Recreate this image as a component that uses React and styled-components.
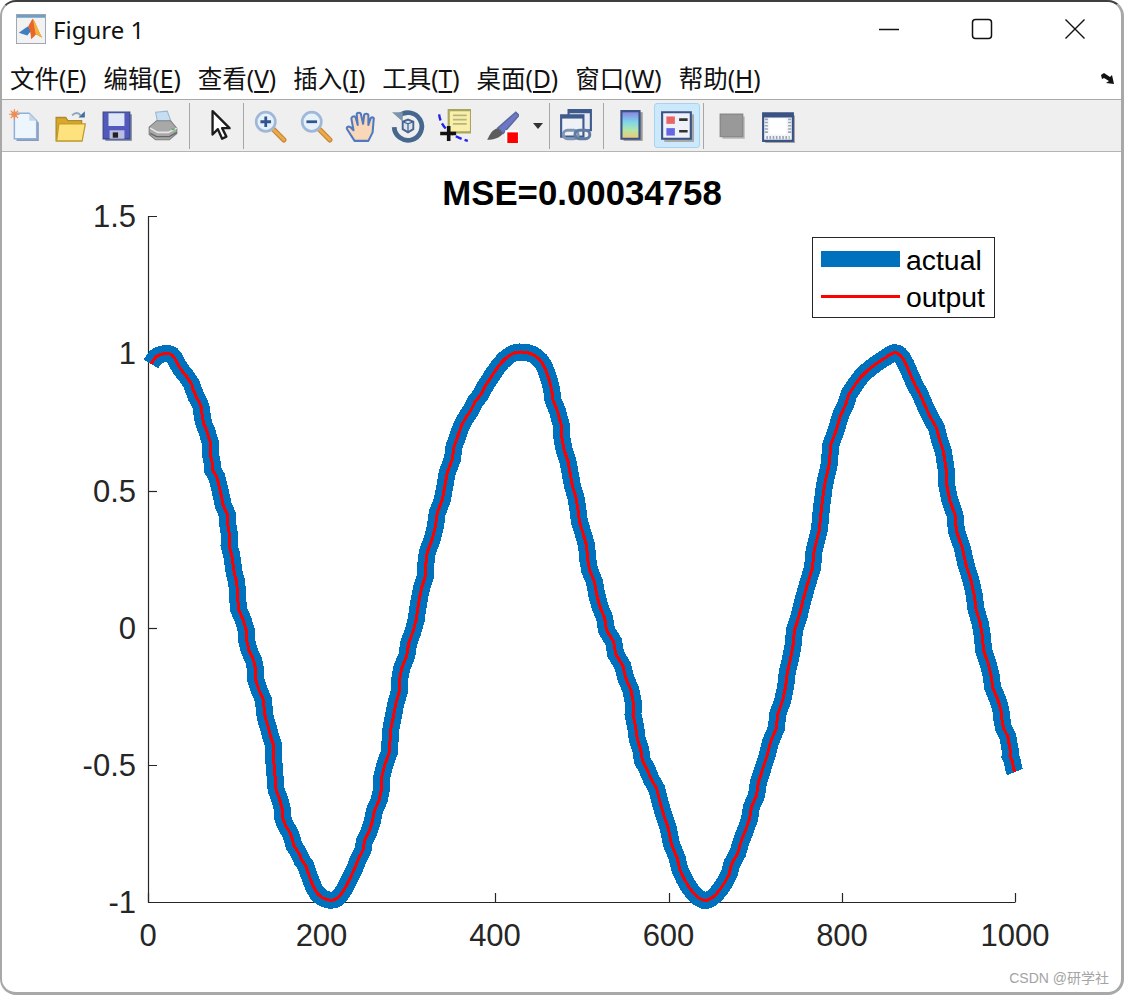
import React from 'react';
import styled, { createGlobalStyle } from 'styled-components';

const GlobalStyle = createGlobalStyle`
  html, body {
    margin: 0;
    background: #fff;
  }
`;

const Page = styled.div`
  width: 1124px;
  height: 995px;
  box-sizing: border-box;
  overflow: hidden;
`;

const Window = styled.div`
  position: relative;
  width: 1124px;
  height: 995px;
  box-sizing: border-box;
  display: flex;
  flex-direction: column;
  background: #fff;
  overflow: hidden;
  border-radius: 16px;
  border-top: 2px solid #3f3f3f;
  border-right: 3px solid #a8a8a8;
  border-bottom: 3px solid #a8a8a8;
  border-left: 2px solid #a8a8a8;
`;

const TitleBar = styled.div`
  height: 58px;
  box-sizing: border-box;
  padding: 0 0 4px 14px;
  display: flex;
  align-items: center;
  flex: none;
`;

const TitleText = styled.div`
  margin-left: 7px;
  font: 24px "Noto Sans", "Open Sans", sans-serif;
  color: #111;
  flex: 1;
`;

const WindowControl = styled.div`
  width: 93px;
  display: flex;
  justify-content: center;
`;

const MenuBar = styled.div`
  height: 39px;
  box-sizing: border-box;
  padding: 0 0 2px 8px;
  display: flex;
  align-items: center;
  gap: 17px;
  flex: none;
  font: 24.500px "Noto Sans", "Noto Sans CJK SC", sans-serif;
  color: #111;
  position: relative;
`;

const MenuItem = styled.span`
  white-space: nowrap;
  line-height: 30px;
  & u {
    text-underline-offset: 3px;
  }
`;

const Overflow = styled.svg`
  position: absolute;
  right: 5px;
  top: 12px;
`;

const Toolbar = styled.div`
  height: 51px;
  flex: none;
  display: flex;
  align-items: center;
  background: #efefef;
  border-top: 1px solid #a9a9a9;
  border-bottom: 1px solid #b4b4b4;
  box-sizing: content-box;
`;

const ToolButton = styled.div`
  width: ${(p) => p.$w || 46}px;
  height: 45px;
  box-sizing: border-box;
  flex: none;
  display: flex;
  align-items: center;
  justify-content: center;
  border-radius: 3px;
  background: ${(p) => (p.$active ? '#cce8fb' : 'transparent')};
  border: 1px solid ${(p) => (p.$active ? '#a5d4f5' : 'transparent')};
  & svg {
    filter: blur(0.45px);
  }
`;

const Separator = styled.div`
  width: 1px;
  height: 46px;
  flex: none;
  background: #a6a6a6;
  margin: 0 ${(p) => p.$right ?? 3}px 0 ${(p) => p.$left ?? 3}px;
`;

const Figure = styled.div`
  flex: 1;
  position: relative;
  min-height: 0;
`;

const Plot = styled.svg`
  display: block;
`;

const Watermark = styled.div`
  position: absolute;
  right: 12px;
  bottom: 5px;
  font: 14px "Liberation Sans", "Noto Sans CJK SC", sans-serif;
  color: #a3a3a3;
`;

const Icon = ({ children, size = 34 }) => (
  <svg width={size} height={size} viewBox="0 0 32 32">{children}</svg>
);

const NewIcon = () => (
  <Icon>
    <path d="M8 6h14l7 7v17H8z" fill="#8b9abb" />
    <path d="M6 4h14l7 7v17H6z" fill="#eef6fd" stroke="#8fb0d8" strokeWidth="1.4" />
    <path d="M20 4v7h7z" fill="#c6d6ea" />
    <circle cx="6" cy="5" r="3" fill="#f4a070" />
    <path d="M6 0v10M1 5h10M2.500 1.500l7 7M9.500 1.500l-7 7" stroke="#ec8a55" strokeWidth="1" />
  </Icon>
);

const OpenIcon = () => (
  <Icon>
    <path d="M17 6c3-3 6-3 8 0" fill="none" stroke="#8ea4bd" strokeWidth="1.800" />
    <path d="M29 2v6h-6z" fill="#3f6da0" />
    <path d="M2 30V8h9l2 3h13v19z" fill="#d9a72b" stroke="#ad8a2b" strokeWidth="1.200" />
    <path d="M2.500 30l2-16h25l-3 16z" fill="#fde27d" stroke="#c49b2a" strokeWidth="1.200" />
  </Icon>
);

const SaveIcon = () => (
  <Icon>
    <path d="M5 5h25v25H5z" fill="#7f8aa8" />
    <path d="M3 3h25v25H3z" fill="#5258bc" stroke="#3c4a85" strokeWidth="1.200" />
    <path d="M8 4h15v12H8z" fill="#dfe6f7" />
    <path d="M9 20h14v8H9z" fill="#b9bde0" />
    <path d="M12 22h5v5h-5z" fill="#222" />
  </Icon>
);

const PrintIcon = () => (
  <Icon>
    <path d="M9 3l11-1 4 11H11z" fill="#c5def3" stroke="#9db5cf" strokeWidth="1" />
    <path d="M3 17l7-6h13l6 7v5l-7 6H9l-6-5z" fill="#a8a8a8" stroke="#7d7d7d" strokeWidth="1" />
    <path d="M4 18l7 4h10l8-4" fill="none" stroke="#e6e6e6" strokeWidth="1.500" />
    <path d="M4 23l6 3h12l7-4" fill="none" stroke="#666" strokeWidth="1.200" />
    <path d="M24 18h3v2h-3z" fill="#68b36b" />
  </Icon>
);

const PointerIcon = () => (
  <Icon>
    <path d="M9 2v22l5-5 4 9 4-2-4-8h7z" fill="#fff" stroke="#1c1c1c" strokeWidth="2.200" strokeLinejoin="round" />
  </Icon>
);

const ZoomIcon = ({ plus }) => (
  <Icon>
    <path d="M19 19l10 10" stroke="#c98a37" strokeWidth="5" strokeLinecap="round" />
    <path d="M19 19l10 10" stroke="#eca94d" strokeWidth="2.500" strokeLinecap="round" />
    <circle cx="12" cy="12" r="9" fill="#e6f1fa" stroke="#9fb8d8" strokeWidth="2.500" />
    <path d={plus ? 'M7 12h10M12 7v10' : 'M7 12h10'} stroke="#31558f" strokeWidth="2.600" />
  </Icon>
);

const HandIcon = () => (
  <Icon>
    <path
      d="M9 30l-7-11c-1-2 1-3 3-2l3 3-2-11c0-2 3-3 4-1l2 7-1-10c0-2 4-2 4 0l2 9 1-8c0-2 4-2 4 0l0 9 2-6c1-2 4-1 3 1l-1 12-4 8z"
      fill="#f8d8b8"
      stroke="#4f79c0"
      strokeWidth="1.900"
      strokeLinejoin="round"
    />
  </Icon>
);

const RotateIcon = () => (
  <Icon>
    <path d="M7 7a13 13 0 1 1-4 10" fill="none" stroke="#46678e" strokeWidth="4.500" />
    <path d="M1 3h10v9z" fill="#7d94ad" />
    <path d="M11 12l5-2 5 2v7l-5 3-5-3z" fill="#dce4ee" stroke="#46678e" strokeWidth="1.800" />
    <path d="M11 12l5 2 5-2M16 14v8" fill="none" stroke="#46678e" strokeWidth="1.200" />
  </Icon>
);

const DatatipIcon = () => (
  <Icon>
    <path d="M2 5c1 10 9 20 27 25" fill="none" stroke="#2222ee" strokeWidth="2.200" strokeDasharray="6 3" />
    <path d="M11 1h21v21H11z" fill="#f9efaa" stroke="#a8a55c" strokeWidth="2" />
    <path d="M15 6h13M15 10h13M15 14h13" stroke="#b8b57a" strokeWidth="1.800" />
    <path d="M3 23h15M11 16v14" stroke="#111" strokeWidth="3.400" />
  </Icon>
);

const BrushIcon = () => (
  <Icon>
    <path d="M12 18L29 3l3 3-15 17z" fill="#6f76c8" stroke="#566c9a" strokeWidth="1.400" />
    <path d="M12 18c-5 1-7 5-10 11 6 0 12-2 15-6z" fill="#5c5c5c" />
    <path d="M19 20h13v13H19z" fill="#fff" />
    <path d="M21 22h10v10H21z" fill="#f00" />
  </Icon>
);

const LinkIcon = () => (
  <Icon>
    <path d="M9 1h21v19H9z" fill="#e8edf4" stroke="#3f5a8c" strokeWidth="2" />
    <path d="M9 1h21v3H9z" fill="#3f5a8c" />
    <path d="M2 6h21v20H2z" fill="#eef2f7" stroke="#3f5a8c" strokeWidth="2" />
    <path d="M2 6h21v3H2z" fill="#3f5a8c" />
    <rect x="4" y="20" width="14" height="8" rx="4" fill="none" stroke="#8095b3" strokeWidth="2.800" />
    <rect x="15" y="20" width="14" height="8" rx="4" fill="none" stroke="#5f7ba3" strokeWidth="2.800" />
  </Icon>
);

const ColorbarIcon = () => (
  <Icon>
    <defs>
      <linearGradient id="cbar" x1="0" y1="0" x2="0" y2="1">
        <stop offset="0" stopColor="#8a7fe0" />
        <stop offset="0.4" stopColor="#7fd6ea" />
        <stop offset="0.7" stopColor="#b6e6a8" />
        <stop offset="1" stopColor="#f9c36f" />
      </linearGradient>
    </defs>
    <path d="M9 3h18v27H9z" fill="#9a9a9a" />
    <path d="M7 2h17v26H7z" fill="url(#cbar)" stroke="#3b5285" strokeWidth="2" />
  </Icon>
);

const LegendIcon = () => (
  <Icon>
    <path d="M4 5h28v26H4z" fill="#a6a6a6" />
    <path d="M2 3h27v25H2z" fill="#eef2f8" stroke="#3b5285" strokeWidth="2" />
    <path d="M6 7h8v7H6z" fill="#ea6666" />
    <path d="M6 18h8v7H6z" fill="#6666e4" />
    <path d="M18 10h8M18 21h8" stroke="#333" strokeWidth="2.400" />
  </Icon>
);

const SubplotIcon = () => (
  <Icon>
    <path d="M7 7h21v21H7z" fill="#b8b8b8" />
    <path d="M5 5h21v21H5z" fill="#999" stroke="#8a8a8a" strokeWidth="1.400" />
  </Icon>
);

const PlotToolsIcon = () => (
  <Icon>
    <path d="M4 6h30v26H4z" fill="#a6a6a6" />
    <path d="M2 4h28v26H2z" fill="#f2f4f8" stroke="#3b5285" strokeWidth="2" />
    <path d="M2 4h28v4H2z" fill="#3b5285" />
    <path d="M5 9v15M27 9v15M5 27h22" stroke="#9aa4b4" strokeWidth="3" strokeDasharray="1.500 1.500" />
    <path d="M8 9h16v15H8z" fill="#fff" />
  </Icon>
);

const tools = [
  { key: 'new', el: <NewIcon /> },
  { key: 'open', el: <OpenIcon /> },
  { key: 'save', el: <SaveIcon /> },
  { key: 'print', el: <PrintIcon /> },
];

const navTools = [
  { key: 'in', el: <ZoomIcon plus /> },
  { key: 'out', el: <ZoomIcon /> },
  { key: 'hand', el: <HandIcon /> },
  { key: 'rotate', el: <RotateIcon /> },
  { key: 'tip', el: <DatatipIcon /> },
];

const menus = [
  ['文件', 'F'], ['编辑', 'E'], ['查看', 'V'], ['插入', 'I'],
  ['工具', 'T'], ['桌面', 'D'], ['窗口', 'W'], ['帮助', 'H'],
];

// control points of the trace, in page pixels
const knots = [
  [151, 364], [156, 357], [163, 354], [172, 355], [180, 368], [192, 385], [200, 407], [208, 437],
  [214, 470], [224, 505], [232, 555], [238, 600], [250, 650], [262, 700], [272, 745], [279, 800],
  [292, 840], [305, 865], [317, 893], [333, 900], [345, 888], [362, 850], [378, 800], [390, 740],
  [400, 680], [416, 620], [426, 565], [441, 500], [458, 435], [480, 395], [502, 362], [520, 352],
  [540, 360], [552, 390], [565, 450], [578, 510], [591, 570], [608, 630], [630, 690], [640, 750],
  [660, 800], [680, 870], [703, 900], [725, 882], [745, 830], [763, 770], [782, 700], [796, 630],
  [815, 550], [832, 445], [855, 385], [885, 358], [900, 355], [915, 385], [940, 440], [950, 500],
  [970, 580], [985, 650], [1000, 710], [1010, 750], [1015, 772],
];

const sampleTrace = () => {
  const out = [];
  for (let i = 0; i < knots.length - 1; i++) {
    const p0 = knots[Math.max(i - 1, 0)];
    const p1 = knots[i];
    const p2 = knots[i + 1];
    const p3 = knots[Math.min(i + 2, knots.length - 1)];
    for (let t = 0; t < 1; t += 0.2) {
      const q = (a, b, c, d) =>
        0.5 * (2 * b + (c - a) * t + (2 * a - 5 * b + 4 * c - d) * t * t + (3 * b - a - 3 * c + d) * t * t * t);
      const x = q(p0[0], p1[0], p2[0], p3[0]);
      const y = q(p0[1], p1[1], p2[1], p3[1]);
      // the wiggle only belongs on the steep parts, the peaks stay smooth
      const wiggle = y > 385 && y < 870 ? Math.sin(x * 0.7) + 0.6 * Math.sin(x * 1.9) : 0;
      out.push([x + wiggle, y]);
    }
  }
  out.push(knots[knots.length - 1]);
  return out.map(([x, y]) => `${x.toFixed(1)},${y.toFixed(1)}`).join(' ');
};

const trace = sampleTrace();
const yTicks = [[216, '1.5'], [353, '1'], [490.5, '0.5'], [627.5, '0'], [765, '-0.5'], [902, '-1']];
const xTicks = [[148, '0'], [321.500, '200'], [495, '400'], [668.500, '600'], [842, '800'], [1015, '1000']];
const axisColor = '#262626';
const sans = '"Liberation Sans", sans-serif';

const Chart = () => (
  <Plot width="1119" height="840" viewBox="2 152 1119 840" fontFamily={sans}>
    <text x="582" y="205" fontSize="34.800" fontWeight="700" textAnchor="middle" fill="#000">MSE=0.00034758</text>

    <path d="M148.500 216V902.500H1015.500" fill="none" stroke={axisColor} strokeWidth="1.200" />
    {yTicks.map(([y, label]) => (
      <g key={label}>
        <path d={`M148 ${Math.round(y) + 0.5}h9`} stroke={axisColor} strokeWidth="1.200" />
        <text x="136" y={y + 11} fontSize="31" textAnchor="end" fill={axisColor}>{label}</text>
      </g>
    ))}
    {xTicks.map(([x, label]) => (
      <g key={label}>
        <path d={`M${Math.round(x) + 0.5} 902v-9`} stroke={axisColor} strokeWidth="1.200" />
        <text x={x} y="946" fontSize="31" textAnchor="middle" fill={axisColor}>{label}</text>
      </g>
    ))}

    <polyline points={trace} fill="none" stroke="#0072bd" strokeWidth="17" shapeRendering="crispEdges" />
    <polyline points={trace} fill="none" stroke="#ff0000" strokeWidth="3" shapeRendering="crispEdges" />

    <rect x="812.500" y="237.500" width="182" height="80" fill="#fff" stroke={axisColor} strokeWidth="1" />
    <rect x="821" y="251" width="79" height="16" fill="#0072bd" />
    <rect x="821" y="295" width="79" height="3" fill="#ff0000" />
    <text x="906" y="270" fontSize="28.400" fill="#000">actual</text>
    <text x="906" y="307" fontSize="28.400" fill="#000">output</text>
  </Plot>
);

const MatlabLogo = () => (
  <svg width="30" height="30" viewBox="0 0 32 32">
    <rect x="0.500" y="0.500" width="31" height="31" fill="#f2f2f2" stroke="#9ba3ad" />
    <rect x="1" y="1" width="30" height="3" fill="#6f9dc4" />
    <path d="M3 20l7-5 3-2 3 5-4 5z" fill="#3f7fc1" />
    <path d="M13 13c2-3 3-6 5-8 3 4 6 14 10 20-3-1-5-3-7-3-2 2-4 4-5 5 0-3 0-7-3-14z" fill="#e8662a" />
    <path d="M18 5c3 4 6 14 10 20-3-1-5-3-7-3z" fill="#f4b33c" />
  </svg>
);

const App = () => (
  <Page>
    <GlobalStyle />
    <Window>
      <TitleBar>
        <MatlabLogo />
        <TitleText>Figure 1</TitleText>
        <WindowControl>
          <svg width="22" height="22" viewBox="0 0 22 22"><path d="M1 11.500h20" stroke="#111" strokeWidth="1.500" /></svg>
        </WindowControl>
        <WindowControl>
          <svg width="22" height="22" viewBox="0 0 22 22"><rect x="1.500" y="1.500" width="19" height="19" rx="3" fill="none" stroke="#111" strokeWidth="1.500" /></svg>
        </WindowControl>
        <WindowControl>
          <svg width="22" height="22" viewBox="0 0 22 22"><path d="M1.500 1.500l19 19M20.500 1.500l-19 19" stroke="#111" strokeWidth="1.400" /></svg>
        </WindowControl>
      </TitleBar>
      <MenuBar>
        {menus.map(([label, key]) => (
          <MenuItem key={key}>{label}(<u>{key}</u>)</MenuItem>
        ))}
        <Overflow width="16" height="14" viewBox="0 0 16 14">
          <path d="M1 3l3-2 6 4 2-2 2 9-8-1 3-2-5-3-2 1z" fill="#111" />
        </Overflow>
      </MenuBar>
      <Toolbar>
        {tools.map((t) => <ToolButton key={t.key}>{t.el}</ToolButton>)}
        <Separator $left={3} $right={7} />
        <ToolButton><PointerIcon /></ToolButton>
        <Separator $left={0} $right={3} />
        {navTools.map((t) => <ToolButton key={t.key}>{t.el}</ToolButton>)}
        <ToolButton $w={50}><BrushIcon /></ToolButton>
        <ToolButton $w={21}>
          <svg width="14" height="8" viewBox="0 0 14 8"><path d="M2 1h10l-5 6z" fill="#333" /></svg>
        </ToolButton>
        <Separator $left={1} />
        <ToolButton><LinkIcon /></ToolButton>
        <Separator $left={4} $right={4} />
        <ToolButton><ColorbarIcon /></ToolButton>
        <ToolButton $active><LegendIcon /></ToolButton>
        <Separator $left={3} $right={5} />
        <ToolButton><SubplotIcon /></ToolButton>
        <ToolButton><PlotToolsIcon /></ToolButton>
      </Toolbar>
      <Figure>
        <Chart />
        <Watermark>CSDN @研学社</Watermark>
      </Figure>
    </Window>
  </Page>
);

export default App;
